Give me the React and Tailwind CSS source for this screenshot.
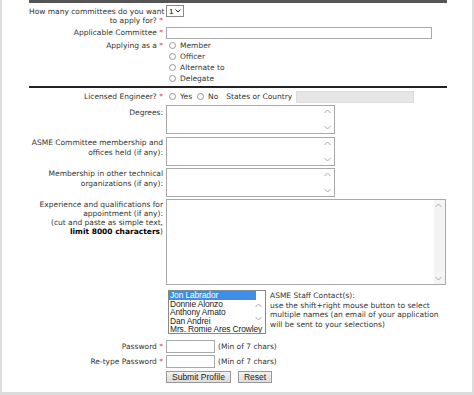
import React from 'react';

const Req = () => <span className="text-[#e0474c]"> *</span>;

function Radio({ label }) {
  return (
    <div className="flex items-center gap-[4px] h-[11px]">
      <span className="w-[7px] h-[7px] rounded-full border border-[#999] bg-white ml-[3px]" />
      <span>{label}</span>
    </div>
  );
}

function Chevrons({ className = '' }) {
  return (
    <div className={`absolute right-[3px] top-[3px] bottom-[3px] flex flex-col justify-between items-center w-[7px] ${className}`}>
      <svg width="7" height="5" viewBox="0 0 7 5"><polyline points="0.5,4 3.5,1 6.5,4" fill="none" stroke="#aaa" strokeWidth="1" /></svg>
      <svg width="7" height="5" viewBox="0 0 7 5"><polyline points="0.5,1 3.5,4 6.5,1" fill="none" stroke="#aaa" strokeWidth="1" /></svg>
    </div>
  );
}

function Area({ w, h }) {
  return (
    <div className={`relative border border-[#a9a9a9] bg-white ${w} ${h}`}>
      <Chevrons />
    </div>
  );
}

// two children: label cell, field cell
function Row({ h, children, className = '' }) {
  return <div className={`grid grid-cols-[134px_1fr] gap-x-[3px] ${h} ${className}`}>{children}</div>;
}

export default function App() {
  const contacts = ['Jon Labrador', 'Donnie Alonzo', 'Anthony Amato', 'Dan Andrei', 'Mrs. Romie Ares Crowley'];
  return (
    <div className="w-[474px] h-[395px] bg-white border-l-[2px] border-r-[2px] border-[#dcdcdc] flex flex-col overflow-hidden text-[#333] text-[7.5px] leading-[9px] font-['DejaVu_Sans',Verdana,sans-serif]">
      <div className="flex-1 pl-[27px] w-[445px]">
        <div className="h-[3px] bg-[#555]" />

        <Row h="h-[22px]" className="pt-[2px]">
          <div className="text-right pt-[2px] whitespace-nowrap">
            How many committees do you want<br />to apply for?<Req />
          </div>
          <div className="flex">
            <div className="w-[18px] h-[12px] border border-[#888] bg-white flex items-center justify-between px-[2px] font-['Liberation_Sans',Arial,sans-serif] text-[8px] text-black">
              1
              <svg width="6" height="4" viewBox="0 0 6 4"><polyline points="0.5,0.5 3,3 5.5,0.5" fill="none" stroke="#222" strokeWidth="1" /></svg>
            </div>
          </div>
        </Row>

        <Row h="h-[15px]">
          <div className="text-right self-center whitespace-nowrap">Applicable Committee<Req /></div>
          <div className="self-center w-[266px] h-[12px] border border-[#a9a9a9] bg-white" />
        </Row>

        <Row h="h-[45px]">
          <div className="text-right pt-[1px] whitespace-nowrap">Applying as a<Req /></div>
          <div className="flex flex-col">
            <Radio label="Member" />
            <Radio label="Officer" />
            <Radio label="Alternate to" />
            <Radio label="Delegate" />
          </div>
        </Row>

        <div className="h-[2px] bg-[#222] mt-[1px]" />

        <Row h="h-[15px]" className="mt-[1px]">
          <div className="text-right self-center whitespace-nowrap">Licensed Engineer?<Req /></div>
          <div className="flex items-center">
            <Radio label="Yes" />
            <span className="w-[2px]" />
            <Radio label="No" />
            <span className="ml-[8px] whitespace-nowrap">States or Country</span>
            <span className="ml-[4px] w-[118px] h-[12px] border border-[#ddd] bg-[#e6e6e6]" />
          </div>
        </Row>

        <Row h="h-[29px]" className="mt-[1px]">
          <div className="text-right pt-[3px]">Degrees:</div>
          <Area w="w-[169px]" h="h-[29px]" />
        </Row>

        <Row h="h-[29px]" className="mt-[3px]">
          <div className="text-right pt-[1px] leading-[10px] whitespace-nowrap">ASME Committee membership and<br />offices held (if any):</div>
          <Area w="w-[169px]" h="h-[29px]" />
        </Row>

        <Row h="h-[29px]" className="mt-[2px]">
          <div className="text-right pt-[1px] leading-[10px] whitespace-nowrap">Membership in other technical<br />organizations (if any):</div>
          <Area w="w-[169px]" h="h-[29px]" />
        </Row>

        <Row h="h-[86px]" className="mt-[2px]">
          <div className="text-right pt-[1px] whitespace-nowrap">
            Experience and qualifications for<br />appointment (if any):<br />(cut and paste as simple text,<br />
            <span className="font-bold text-black">limit 8000 characters</span>)
          </div>
          <div className="relative w-[280px] h-[86px] border border-[#a9a9a9] bg-white">
            <div className="absolute right-0 top-0 bottom-0 w-[11px] bg-[#f4f4f4]" />
            <Chevrons className="right-[2px]" />
          </div>
        </Row>

        <Row h="h-[44px]" className="mt-[5px]">
          <div />
          <div className="flex">
            <div className="relative ml-[2px] w-[98px] h-[44px] border border-[#888] bg-white font-['Liberation_Sans',Arial,sans-serif] text-[8.4px] leading-[8.5px] tracking-[-0.1px] text-[#222] overflow-hidden">
              {contacts.map((c, i) => (
                <div key={c} className={`pl-[1px] whitespace-nowrap ${i === 0 ? 'bg-[#3b8fe8] text-white w-[87px]' : ''}`}>{c}</div>
              ))}
              <div className="absolute right-0 top-0 h-[33px] w-[9px] bg-white">
                <Chevrons className="right-[1px] top-[12px] bottom-[1px]" />
              </div>
            </div>
            <div className="ml-[4px] pt-[1px] leading-[9.5px] whitespace-nowrap">
              ASME Staff Contact(s):<br />use the shift+right mouse button to select<br />multiple names (an email of your application<br />will be sent to your selections)
            </div>
          </div>
        </Row>

        <Row h="h-[13px]" className="mt-[6px]">
          <div className="text-right self-center whitespace-nowrap">Password<Req /></div>
          <div className="flex items-center">
            <span className="w-[49px] h-[13px] border border-[#a9a9a9] bg-white" />
            <span className="ml-[3px] whitespace-nowrap">(Min of 7 chars)</span>
          </div>
        </Row>

        <Row h="h-[13px]" className="mt-[2px]">
          <div className="text-right self-center whitespace-nowrap">Re-type Password<Req /></div>
          <div className="flex items-center">
            <span className="w-[49px] h-[13px] border border-[#a9a9a9] bg-white" />
            <span className="ml-[3px] whitespace-nowrap">(Min of 7 chars)</span>
          </div>
        </Row>

        <Row h="h-[12px]" className="mt-[3px]">
          <div />
          <div className="flex gap-[7px] font-['Liberation_Sans',Arial,sans-serif] text-[8.5px] text-[#222]">
            <span className="h-[12px] px-[5px] flex items-center border border-[#999] bg-gradient-to-b from-[#f2f2f2] to-[#dcdcdc]">Submit Profile</span>
            <span className="h-[12px] px-[5px] flex items-center border border-[#999] bg-gradient-to-b from-[#f2f2f2] to-[#dcdcdc]">Reset</span>
          </div>
        </Row>
      </div>
      <div className="h-[3px] bg-[#dcdcdc]" />
    </div>
  );
}
